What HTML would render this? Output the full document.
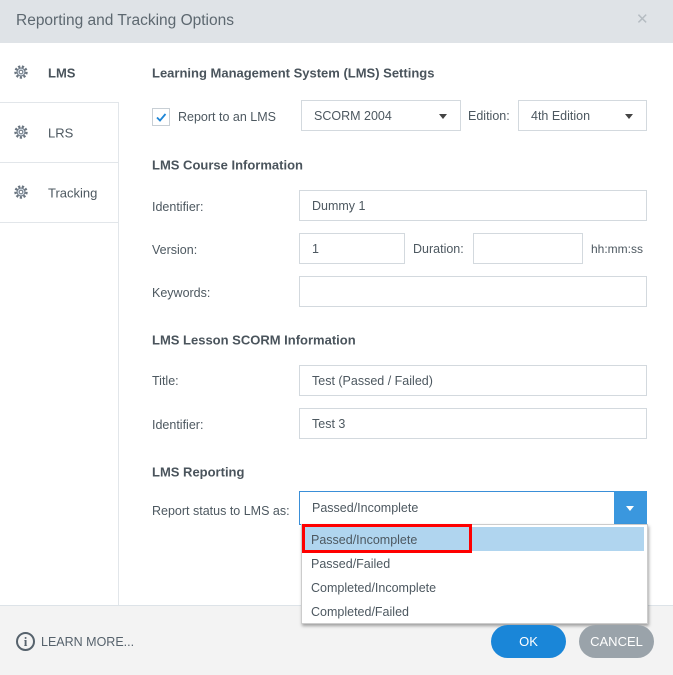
<!DOCTYPE html>
<html><head><style>
*{margin:0;padding:0;box-sizing:border-box}
body{width:673px;height:675px;position:relative;background:#fff;font-family:"Liberation Sans",sans-serif;font-size:12.5px;color:#4d5860;overflow:hidden}
.a{position:absolute;white-space:nowrap}
.t{transform:translateY(-50%)}
.h{font-weight:bold;font-size:13px;color:#4a545c}
.in{position:absolute;border:1px solid #d3d9de;background:#fff}
.in span{position:absolute;left:12px;top:50%;transform:translateY(-50%)}
.arr{position:absolute;width:0;height:0;border-left:4px solid transparent;border-right:4px solid transparent;border-top:5px solid #444}
.line{position:absolute;background:#e2e6ea}
</style></head><body>
<div class="a" style="left:0;top:0;width:673px;height:43px;background:#dfe3e7"></div>
<div class="a t" style="left:16px;top:21px;font-size:15.5px;color:#5d6870">Reporting and Tracking Options</div>
<div class="a t" style="left:636px;top:19px;font-size:15px;color:#b5bcc2">✕</div>

<div class="line" style="left:118px;top:102px;width:1px;height:503px"></div>
<div class="line" style="left:0;top:102px;width:119px;height:1px"></div>
<div class="line" style="left:0;top:162px;width:119px;height:1px"></div>
<div class="line" style="left:0;top:222px;width:119px;height:1px"></div>
<svg class="a" style="left:13px;top:64px" width="16" height="16" viewBox="0 0 16 16"><circle cx="8" cy="8" r="5.5" fill="none" stroke="#6a7580" stroke-width="2.4" stroke-dasharray="2.2 1.6"/><circle cx="8" cy="8" r="4" fill="#d7dfe8" stroke="#6a7580"/><circle cx="8" cy="8" r="1.8" fill="#fff" stroke="#6a7580"/></svg>
<svg class="a" style="left:13px;top:124px" width="16" height="16" viewBox="0 0 16 16"><circle cx="8" cy="8" r="5.5" fill="none" stroke="#6a7580" stroke-width="2.4" stroke-dasharray="2.2 1.6"/><circle cx="8" cy="8" r="4" fill="#d7dfe8" stroke="#6a7580"/><circle cx="8" cy="8" r="1.8" fill="#fff" stroke="#6a7580"/></svg>
<svg class="a" style="left:13px;top:184px" width="16" height="16" viewBox="0 0 16 16"><circle cx="8" cy="8" r="5.5" fill="none" stroke="#6a7580" stroke-width="2.4" stroke-dasharray="2.2 1.6"/><circle cx="8" cy="8" r="4" fill="#d7dfe8" stroke="#6a7580"/><circle cx="8" cy="8" r="1.8" fill="#fff" stroke="#6a7580"/></svg>
<div class="a t" style="left:48px;top:73px;font-weight:bold;font-size:13px;color:#4a545c">LMS</div>
<div class="a t" style="left:48px;top:133px;font-size:13px">LRS</div>
<div class="a t" style="left:48px;top:193px;font-size:13px">Tracking</div>

<div class="a t h" style="left:152px;top:73px">Learning Management System (LMS) Settings</div>
<div class="a" style="left:152px;top:108px;width:18px;height:18px;border:1px solid #c8cfd5"></div>
<svg class="a" style="left:154px;top:110px" width="14" height="14" viewBox="0 0 14 14"><path d="M3 7.5 L6 10.5 L11.5 4" fill="none" stroke="#1f86d6" stroke-width="1.8"/></svg>
<div class="a t" style="left:178px;top:117px">Report to an LMS</div>
<div class="in" style="left:301px;top:100px;width:160px;height:31px"><span>SCORM 2004</span><div class="arr" style="right:13px;top:13px"></div></div>
<div class="a t" style="left:468px;top:116px">Edition:</div>
<div class="in" style="left:518px;top:100px;width:129px;height:31px"><span>4th Edition</span><div class="arr" style="right:13px;top:13px"></div></div>

<div class="a t h" style="left:152px;top:165px">LMS Course Information</div>
<div class="a t" style="left:152px;top:207px">Identifier:</div>
<div class="in" style="left:299px;top:190px;width:348px;height:31px"><span>Dummy 1</span></div>
<div class="a t" style="left:152px;top:250px">Version:</div>
<div class="in" style="left:299px;top:233px;width:106px;height:31px"><span>1</span></div>
<div class="a t" style="left:413px;top:249px">Duration:</div>
<div class="in" style="left:473px;top:233px;width:110px;height:31px"></div>
<div class="a t" style="left:591px;top:249px;font-size:12px">hh:mm:ss</div>
<div class="a t" style="left:152px;top:293px">Keywords:</div>
<div class="in" style="left:299px;top:276px;width:348px;height:31px"></div>

<div class="a t h" style="left:152px;top:340px">LMS Lesson SCORM Information</div>
<div class="a t" style="left:152px;top:381px">Title:</div>
<div class="in" style="left:299px;top:365px;width:348px;height:31px"><span>Test (Passed / Failed)</span></div>
<div class="a t" style="left:152px;top:425px">Identifier:</div>
<div class="in" style="left:299px;top:408px;width:348px;height:31px"><span>Test 3</span></div>

<div class="a t h" style="left:152px;top:472px">LMS Reporting</div>
<div class="a t" style="left:152px;top:511px">Report status to LMS as:</div>
<div class="in" style="left:299px;top:491px;width:348px;height:34px;border-color:#3a8fd8"><span>Passed/Incomplete</span></div>
<div class="a" style="left:614px;top:491px;width:33px;height:34px;background:#3a97de"></div>
<div class="arr" style="left:626px;top:506px;border-top-color:#fff"></div>

<div class="line" style="left:0;top:605px;width:673px;height:70px;background:#f3f3f3;border-top:1px solid #dde3e8"></div>
<div class="a" style="left:301px;top:524px;width:347px;height:100px;background:#fff;border:1px solid #ccc;box-shadow:1px 2px 3px rgba(0,0,0,.35)"></div>
<div class="a" style="left:302px;top:527px;width:342px;height:24px;background:#b0d5ef"></div>
<div class="a" style="left:302px;top:524px;width:170px;height:29px;border:3px solid #f00"></div>
<div class="a t" style="left:311px;top:540px">Passed/Incomplete</div>
<div class="a t" style="left:311px;top:564px">Passed/Failed</div>
<div class="a t" style="left:311px;top:588px">Completed/Incomplete</div>
<div class="a t" style="left:311px;top:612px">Completed/Failed</div>

<div class="a" style="left:16px;top:632px;width:19px;height:19px;border:2px solid #56626c;border-radius:50%;text-align:center;font-size:13px;line-height:15px;font-weight:bold;color:#56626c;font-family:'Liberation Serif',serif">i</div>
<div class="a t" style="left:41px;top:642px;font-size:12.5px;color:#56626c">LEARN MORE...</div>
<div class="a" style="left:491px;top:625px;width:75px;height:33px;border-radius:17px;background:#1a86d8;color:#fff;text-align:center;line-height:33px;font-size:13px">OK</div>
<div class="a" style="left:579px;top:625px;width:75px;height:33px;border-radius:17px;background:#9aa3aa;color:#fff;text-align:center;line-height:33px;font-size:13px">CANCEL</div>
</body></html>
